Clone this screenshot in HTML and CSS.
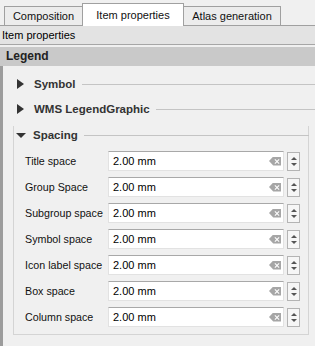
FILE: index.html
```html
<!DOCTYPE html>
<html lang="en">
<head>
  <meta charset="UTF-8" />
  <title>Item properties</title>
  <link rel="stylesheet" href="styles.css">
</head>
<body>

<div class="tabs">
  <div class="tab">Composition</div>
  <div class="tab active">Item properties</div>
  <div class="tab">Atlas generation</div>
</div>

<div class="bar">Item properties</div>
<div class="legend-bar">Legend</div>

<div class="panel">
  <div class="section">
    <span class="tri right"></span>
    <span class="title">Symbol</span>
    <span class="rule"></span>
  </div>
  <div class="section">
    <span class="tri right"></span>
    <span class="title">WMS LegendGraphic</span>
    <span class="rule"></span>
  </div>

  <div class="group">
    <div class="section group-head">
      <span class="tri down"></span>
      <span class="title">Spacing</span>
      <span class="rule"></span>
    </div>
    <div class="rows">
      <label>Title space</label>
      <div class="spin"><div class="field">2.00 mm<span class="clear"></span></div><div class="arrows"><i class="up"></i><i class="dn"></i></div></div>
      <label>Group Space</label>
      <div class="spin"><div class="field">2.00 mm<span class="clear"></span></div><div class="arrows"><i class="up"></i><i class="dn"></i></div></div>
      <label>Subgroup space</label>
      <div class="spin"><div class="field">2.00 mm<span class="clear"></span></div><div class="arrows"><i class="up"></i><i class="dn"></i></div></div>
      <label>Symbol space</label>
      <div class="spin"><div class="field">2.00 mm<span class="clear"></span></div><div class="arrows"><i class="up"></i><i class="dn"></i></div></div>
      <label>Icon label space</label>
      <div class="spin"><div class="field">2.00 mm<span class="clear"></span></div><div class="arrows"><i class="up"></i><i class="dn"></i></div></div>
      <label>Box space</label>
      <div class="spin"><div class="field">2.00 mm<span class="clear"></span></div><div class="arrows"><i class="up"></i><i class="dn"></i></div></div>
      <label>Column space</label>
      <div class="spin"><div class="field">2.00 mm<span class="clear"></span></div><div class="arrows"><i class="up"></i><i class="dn"></i></div></div>
    </div>
  </div>
</div>

</body>
</html>
```

FILE: styles.css
```css
* { box-sizing: border-box; }
body {
  margin: 0;
  width: 315px;
  height: 346px;
  overflow: hidden;
  background-color: #f0f0f0;
  font-family: "Liberation Sans", Arial, sans-serif;
  font-size: 11px;
  color: #000;
}
.tabs {
  display: flex;
  align-items: flex-end;
  height: 26px;
  padding-left: 4px;
  border-bottom: 1px solid #a0a0a0;
}
.tab {
  height: 19px;
  padding: 3px 0 0;
  text-align: center;
  background: #ececec;
  border: 1px solid #a0a0a0;
  border-bottom: none;
  margin-right: -1px;
  color: #111;
}
.tab:nth-child(1) { width: 79px; }
.tab:nth-child(2) { width: 102px; }
.tab:nth-child(3) { width: 98px; }
.tab.active {
  height: 23px;
  padding-top: 5px;
  margin-bottom: -1px;
  background: #fff;
  position: relative;
}
.bar {
  height: 19px;
  padding: 3px 2px 0;
  background: #e3e3e3;
  border-bottom: 1px solid #a6a6a6;
}
.legend-bar {
  height: 19px;
  margin-top: 2px;
  padding: 2px 6px 0;
  background: #c9c9c9;
  font-weight: bold;
  font-size: 12px;
  color: #222;
}
.panel {
  height: 282px;
  border-left: 3px solid #9c9c9c;
  padding: 9px 0 0 13px;
  display: flex;
  flex-direction: column;
  gap: 7px;
}
.section {
  display: flex;
  align-items: center;
  height: 18px;
}
.title {
  font-weight: bold;
  font-size: 11.5px;
  color: #333;
  padding-left: 9px;
}
.rule {
  flex: 1;
  height: 1px;
  margin-left: 6px;
  background: #c4c4c4;
}
.tri {
  width: 0;
  height: 0;
  margin-left: 1px;
}
.tri.right {
  border-top: 5px solid transparent;
  border-bottom: 5px solid transparent;
  border-left: 7px solid #333;
  margin-right: 1px;
}
.tri.down {
  border-left: 5px solid transparent;
  border-right: 5px solid transparent;
  border-top: 5px solid #333;
  margin-left: 3px;
  margin-right: -2px;
}
.group {
  margin: 1px 0 0 -3px;
  width: 296px;
  height: 209px;
  border: 1px solid #d4d4d4;
  border-top: none;
}
.group-head {
  margin-left: -1px;
}
.group-head .rule {
  margin-right: -1px;
}
.rows {
  display: grid;
  grid-template-columns: 83px 1fr;
  row-gap: 6px;
  padding: 7px 8px 0 11px;
  align-items: center;
}
.rows label {
  font-size: 10.7px;
  color: #111;
}
.spin {
  display: flex;
  align-items: center;
  gap: 3px;
}
.field {
  flex: 1;
  height: 20px;
  display: flex;
  align-items: center;
  justify-content: space-between;
  padding: 0 2px 0 4px;
  background: #fff;
  border: 1px solid #e2e2e2;
  border-top-color: #a8a8a8;
}
.clear {
  width: 12px;
  height: 9px;
  background: #a6a6a6;
  clip-path: polygon(0 50%, 35% 0, 100% 0, 100% 100%, 35% 100%);
  position: relative;
}
.clear::before, .clear::after {
  content: "";
  position: absolute;
  left: 5px;
  top: 4px;
  width: 6px;
  height: 1px;
  background: #fff;
  transform: rotate(45deg);
}
.clear::after { transform: rotate(-45deg); }
.arrows {
  width: 13px;
  height: 19px;
  border: 1px solid #b4b4b4;
  background: #f6f6f6;
  display: flex;
  flex-direction: column;
  align-items: center;
  justify-content: center;
  gap: 3px;
}
.arrows i {
  width: 0;
  height: 0;
  border-left: 3px solid transparent;
  border-right: 3px solid transparent;
}
.arrows .up { border-bottom: 3px solid #555; }
.arrows .dn { border-top: 3px solid #555; }
```
